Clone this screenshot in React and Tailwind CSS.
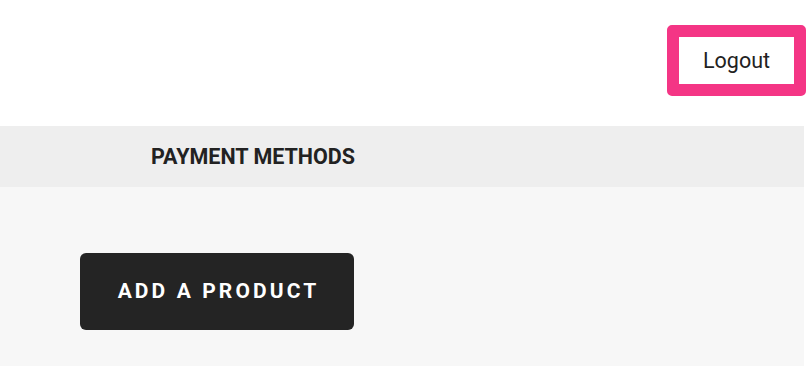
export default function App() {
    return (
        <div className="min-h-screen flex flex-col bg-white font-['Roboto',sans-serif] text-[#222222]">
            {/* top bar */}
            <header className="h-[126px] flex justify-end items-start pt-[25px] pr-[5px]">
                <button className="h-[71px] w-[139px] rounded-[5px] border-[12px] border-[#f43585] bg-white text-[21.5px] leading-none text-[#222222]">
                    Logout
                </button>
            </header>

            {/* tabs */}
            <nav className="w-[804px] h-[61px] bg-[#eeeeee] flex items-center pl-[151px]">
                <span className="text-[21.5px] leading-none font-bold uppercase">Payment Methods</span>
            </nav>

            {/* content */}
            <main className="w-[804px] flex-1 bg-[#f7f7f7] pt-[66px] pl-[80px]">
                <button className="h-[77px] w-[274px] rounded-[6px] bg-[#242424] text-white text-[21px] font-bold uppercase tracking-[3.1px] pl-[3px]">
                    Add a product
                </button>
            </main>
        </div>
    );
}
